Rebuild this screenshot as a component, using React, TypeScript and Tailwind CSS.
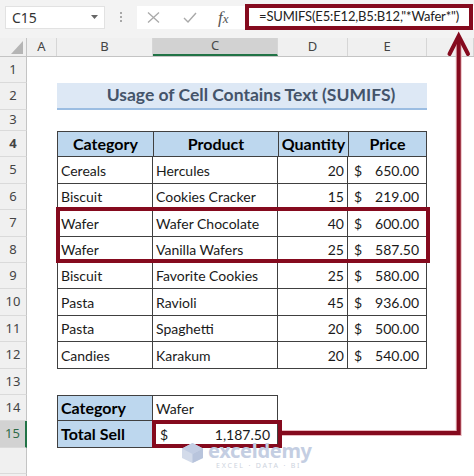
import React from 'react'

type Item = { n: number; h: string; cat: string; prod: string; qty: number; price: string }

const items: Item[] = [
  { n: 5, h: 'h-[27px]', cat: 'Cereals', prod: 'Hercules', qty: 20, price: '650.00' },
  { n: 6, h: 'h-[26px]', cat: 'Biscuit', prod: 'Cookies Cracker', qty: 15, price: '219.00' },
  { n: 7, h: 'h-[27px]', cat: 'Wafer', prod: 'Wafer Chocolate', qty: 40, price: '600.00' },
  { n: 8, h: 'h-[26px]', cat: 'Wafer', prod: 'Vanilla Wafers', qty: 25, price: '587.50' },
  { n: 9, h: 'h-[26px]', cat: 'Biscuit', prod: 'Favorite Cookies', qty: 25, price: '580.00' },
  { n: 10, h: 'h-[27px]', cat: 'Pasta', prod: 'Ravioli', qty: 45, price: '936.00' },
  { n: 11, h: 'h-[26px]', cat: 'Pasta', prod: 'Spaghetti', qty: 20, price: '500.00' },
  { n: 12, h: 'h-[27px]', cat: 'Candies', prod: 'Karakum', qty: 20, price: '540.00' },
]

const cA = 'w-[30px] shrink-0'
const cB = 'w-[96px] shrink-0'
const cC = 'w-[125px] shrink-0'
const cD = 'w-[70px] shrink-0'
const cE = 'w-[79px] shrink-0'
const line = 'border-[#404040]'

const RowHead = ({ n, sel }: { n?: number; sel?: boolean }) => (
  <div
    className={
      'w-[27px] shrink-0 flex items-center justify-center border-b border-[#dadada] text-[13px] font-["Noto_Sans",sans-serif] ' +
      (sel
        ? 'bg-[#d2d2d2] border-r-2 border-r-[#217346] text-[#2f6b48]'
        : 'bg-[#f0f0f0] border-r border-r-[#c4c4c4] text-[#444]')
    }
  >
    {n}
  </div>
)

const ColHead = ({ w, label, sel }: { w: string; label: string; sel?: boolean }) => (
  <div
    className={
      w +
      ' flex items-center justify-center border-r border-[#d6d6d6] text-[13px] ' +
      (sel ? 'bg-[#d2d2d2] border-b-2 border-b-[#217346] text-[#4a4a4a]' : 'text-[#444]')
    }
  >
    {label}
  </div>
)

const Watermark = () => (
  <div className="absolute left-[180px] top-[442px] flex items-start gap-[3px] pointer-events-none">
    <svg width="25" height="22" viewBox="0 0 25 22">
      <polygon points="12.5,1 23,6.5 23,16 12.5,21 2,16 2,6.5" fill="#d3dbea" />
      <polygon points="12.5,1 23,6.5 12.5,12 2,6.5" fill="#c2cde3" />
      <polygon points="12.5,12 23,6.5 23,16 12.5,21" fill="#b8c4dc" />
    </svg>
    <div className="flex flex-col">
      <span className="text-[20px] leading-[17px] font-bold text-[#c4cee2] font-['Noto_Sans',sans-serif] tracking-[-0.3px]">
        exceldemy
      </span>
      <span className="mt-[3px] text-[7px] leading-[8px] tracking-[1.8px] text-[#cdd3de] font-['Noto_Sans',sans-serif] pl-[8px]">
        EXCEL · DATA · BI
      </span>
    </div>
  </div>
)

export default function App() {
  return (
    <div className="relative w-[474px] h-[476px] overflow-hidden bg-white font-['Lato',sans-serif] text-[#1a1a1a]">
      {/* formula bar */}
      <div className="h-[38px] bg-[#f3f3f3] pl-[5px] pb-[4px] flex items-center">
        <div className="w-[100px] h-[23px] bg-white border border-[#e2e2e2] flex items-center justify-between pl-[6px] pr-[6px] text-[14px] text-[#333] font-['Noto_Sans',sans-serif]">
          <span>C15</span>
          <svg width="7" height="4" viewBox="0 0 7 4">
            <polygon points="0,0 7,0 3.5,4" fill="#666" />
          </svg>
        </div>
        <div className="w-[32px] h-[23px] flex flex-col items-center justify-center gap-[2px]">
          <span className="w-[2px] h-[2px] bg-[#a8a8a8]" />
          <span className="w-[2px] h-[2px] bg-[#a8a8a8]" />
          <span className="w-[2px] h-[2px] bg-[#a8a8a8]" />
        </div>
        <div className="w-[108px] h-[23px] bg-white flex items-center pl-[10px]">
          <svg width="13" height="11" viewBox="0 0 13 11" className="shrink-0">
            <path d="M1 0.5 L12 10.5 M12 0.5 L1 10.5" stroke="#a9a9a9" strokeWidth="1.3" fill="none" />
          </svg>
          <svg width="14" height="11" viewBox="0 0 14 11" className="ml-[23px] shrink-0">
            <path d="M1 6 L5 10 L13 1" stroke="#a9a9a9" strokeWidth="1.4" fill="none" />
          </svg>
          <span className="ml-[21px] font-['Liberation_Serif',serif] italic text-[#555] leading-none">
            <span className="text-[17px]">f</span>
            <span className="text-[13px]">x</span>
          </span>
        </div>
        <div className="w-[228px] h-[26px] bg-white border-4 border-[#850a1e] flex items-center pl-[10px] text-[13px] text-[#222] whitespace-nowrap tracking-[-0.15px]">
          =SUMIFS(E5:E12,B5:B12,"*Wafer*")
        </div>
        <div className="flex-1 h-[23px] bg-white" />
      </div>

      {/* column headers */}
      <div className="flex h-[19px] bg-[#f0f0f0] border-b border-[#c4c4c4] font-['Noto_Sans',sans-serif]">
        <div className="w-[27px] shrink-0 flex items-end justify-end pr-[3px] pb-[2px] border-r border-[#c4c4c4]">
          <svg width="12" height="13" viewBox="0 0 12 13">
            <polygon points="12,0 12,13 0,13" fill="#b5b5b5" />
          </svg>
        </div>
        <ColHead w={cA} label="A" />
        <ColHead w={cB} label="B" />
        <ColHead w={cC} label="C" sel />
        <ColHead w={cD} label="D" />
        <ColHead w={cE} label="E" />
        <ColHead w="flex-1" label="" />
      </div>

      {/* row 1 */}
      <div className="flex h-[26px]">
        <RowHead n={1} />
      </div>

      {/* row 2 - title */}
      <div className="flex h-[27px]">
        <RowHead n={2} />
        <div className={cA} />
        <div className="w-[370px] shrink-0 bg-[#dde8f5] border-b-2 border-[#9bbde2] flex items-center justify-center pl-[18px] text-[17.5px] font-bold text-[#44546a]">
          Usage of Cell Contains Text (SUMIFS)
        </div>
      </div>

      {/* row 3 */}
      <div className="flex h-[21px]">
        <RowHead n={3} />
      </div>

      {/* row 4 - header */}
      <div className="flex h-[26px] text-[16px] font-bold text-black">
        <RowHead n={4} />
        <div className={cA} />
        <div className={`${cB} bg-[#bdd7ee] border border-r-0 ${line} flex items-center justify-center`}>Category</div>
        <div className={`${cC} bg-[#bdd7ee] border border-r-0 ${line} flex items-center justify-center`}>Product</div>
        <div className={`${cD} bg-[#bdd7ee] border border-r-0 ${line} flex items-center justify-center`}>Quantity</div>
        <div className={`${cE} bg-[#bdd7ee] border ${line} flex items-center justify-center`}>Price</div>
      </div>

      {/* data rows */}
      {items.map((it) => (
        <div key={it.n} className={`flex ${it.h} text-[14px]`}>
          <RowHead n={it.n} />
          <div className={cA} />
          <div className={`${cB} border-l border-r border-b ${line} flex items-center pl-[3px]`}>{it.cat}</div>
          <div className={`${cC} border-r border-b ${line} flex items-center pl-[3px]`}>{it.prod}</div>
          <div className={`${cD} border-r border-b ${line} flex items-center justify-end pr-[3px]`}>{it.qty}</div>
          <div className={`${cE} border-r border-b ${line} flex items-center justify-between pl-[6px] pr-[7px]`}>
            <span>$</span>
            <span>{it.price}</span>
          </div>
        </div>
      ))}

      {/* row 13 */}
      <div className="flex h-[26px]">
        <RowHead n={13} />
      </div>

      {/* row 14 */}
      <div className="flex h-[26px]">
        <RowHead n={14} />
        <div className={cA} />
        <div className={`${cB} bg-[#bdd7ee] border ${line} flex items-center pl-[3px] text-[16px] font-bold text-black`}>Category</div>
        <div className={`${cC} border-t border-r border-b ${line} flex items-end pl-[3px] pb-[1px] text-[14px]`}>Wafer</div>
      </div>

      {/* row 15 */}
      <div className="flex h-[27px]">
        <RowHead n={15} sel />
        <div className={cA} />
        <div className={`${cB} bg-[#bdd7ee] border-l border-r border-b ${line} flex items-center pl-[3px] text-[16px] font-bold text-black`}>Total Sell</div>
        <div className={`${cC} border-r border-b ${line} flex items-center justify-between pl-[7px] pr-[7px] pt-[1px] text-[14px]`}>
          <span>$</span>
          <span>1,187.50</span>
        </div>
      </div>

      {/* rows 16+ */}
      <div className="flex h-[26px]">
        <RowHead />
      </div>
      <div className="flex h-[26px]">
        <RowHead />
      </div>

      {/* highlight boxes */}
      <div className="absolute left-[56px] top-[207px] w-[374px] h-[56px] border-4 border-[#850a1e] pointer-events-none" />
      <div className="absolute left-[152px] top-[420px] w-[130px] h-[28px] border-4 border-[#850a1e] pointer-events-none" />

      <Watermark />

      {/* arrow */}
      <svg className="absolute left-0 top-0 pointer-events-none" width="474" height="476" viewBox="0 0 474 476">
        <g stroke="#e9b8be" strokeWidth="6" fill="none" strokeLinejoin="miter">
          <path d="M282 433 H458.7 V38" />
        </g>
        <g stroke="#850a1e" strokeWidth="4" fill="none" strokeLinejoin="miter">
          <path d="M282 433 H458.7 V38" />
          <path d="M449.5 54 L458.7 36 L468 54" strokeLinecap="round" />
        </g>
      </svg>
    </div>
  )
}
